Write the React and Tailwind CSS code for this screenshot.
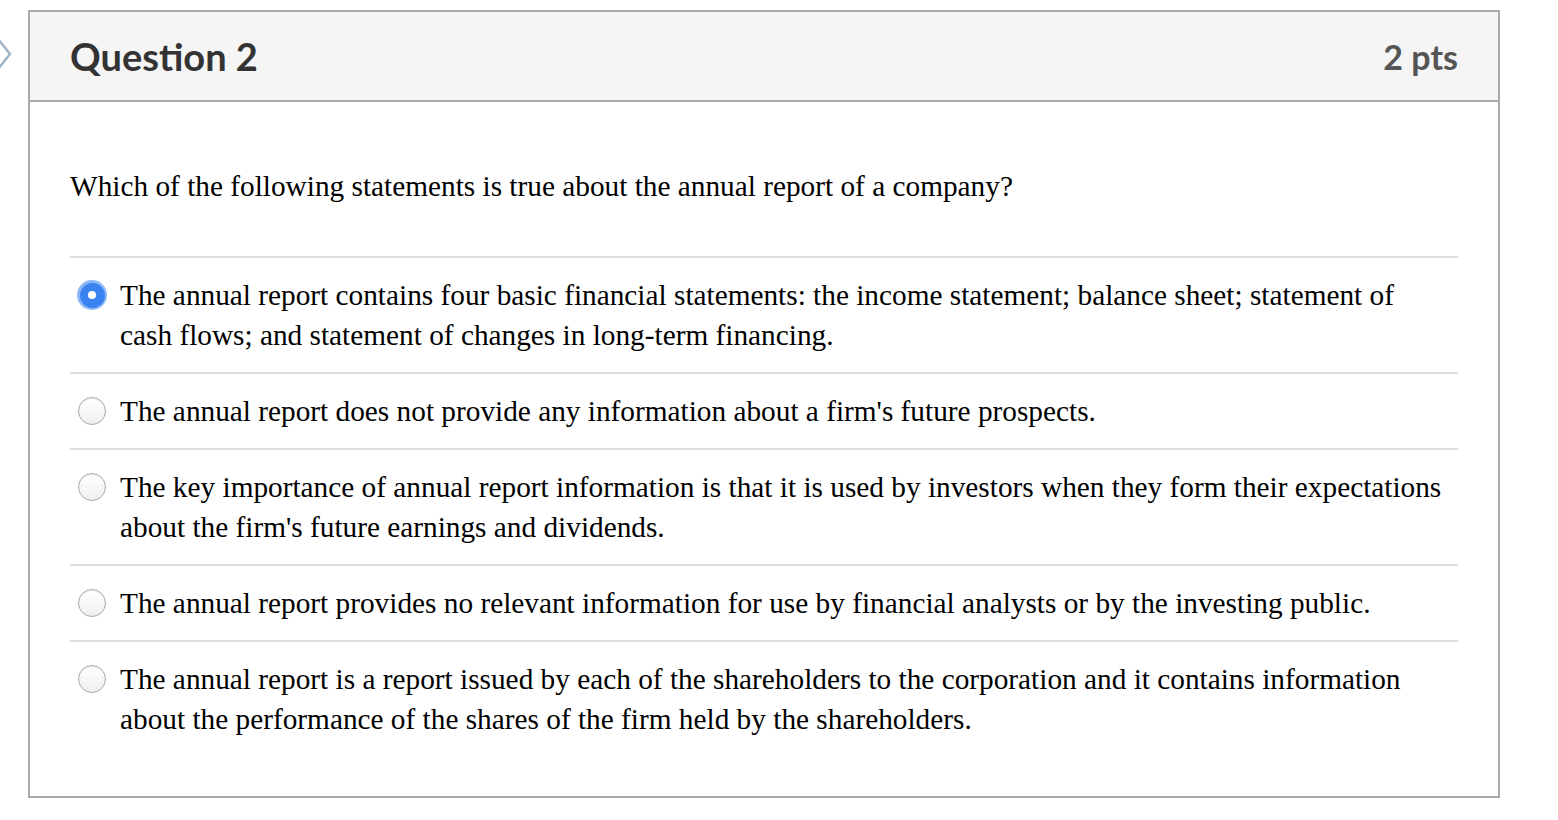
import React from 'react';

const answers = [
  {
    text: 'The annual report contains four basic financial statements: the income statement; balance sheet; statement of cash flows; and statement of changes in long-term financing.',
    selected: true,
  },
  { text: "The annual report does not provide any information about a firm's future prospects." },
  {
    text: "The key importance of annual report information is that it is used by investors when they form their expectations about the firm's future earnings and dividends.",
  },
  { text: 'The annual report provides no relevant information for use by financial analysts or by the investing public.' },
  {
    text: 'The annual report is a report issued by each of the shareholders to the corporation and it contains information about the performance of the shares of the firm held by the shareholders.',
  },
];

function Radio({ selected }) {
  if (selected) {
    return (
      <span className="flex h-[30px] w-[30px] shrink-0 items-center justify-center rounded-full bg-[#8db8f7]">
        <span className="flex h-[25px] w-[25px] items-center justify-center rounded-full bg-[#3a82f0]">
          <span className="h-[8px] w-[8px] rounded-full bg-white" />
        </span>
      </span>
    );
  }
  return (
    <span className="h-[28px] w-[28px] shrink-0 rounded-full border border-[#aaaaaa] bg-gradient-to-b from-white to-[#f0f0f0] shadow-[inset_0_1px_1px_rgba(0,0,0,0.08)]" />
  );
}

export default function App() {
  return (
    <div className="relative min-h-[820px] bg-white pt-[10px]">
      <svg className="absolute left-0 top-[36px]" width="14" height="36" viewBox="0 0 14 36">
        <path d="M-2 3 L10 18 L-2 33" fill="none" stroke="#a3b5c8" strokeWidth="2.5" />
      </svg>
      <div className="ml-[28px] w-[1472px] border-2 border-[#aaaaaa]">
        <div className="flex h-[90px] items-center justify-between border-b-2 border-[#aaaaaa] bg-[#f5f5f5] px-[40px] font-['Lato',sans-serif] font-bold">
          <h2 className="text-[38px] text-[#333333]">Question 2</h2>
          <span className="text-[34px] text-[#555555]">2 pts</span>
        </div>
        <div className="px-[40px] pb-[40px] pt-[64px] font-['Liberation_Serif','Times_New_Roman',serif] text-[29.3px] leading-[40px] text-black">
          <p className="mb-[50px]">Which of the following statements is true about the annual report of a company?</p>
          <div>
            {answers.map((a, i) => (
              <div key={i} className="flex gap-[13px] border-t-2 border-[#dddddd] py-[17px] pl-[7px]">
                <div className="flex h-[40px] w-[30px] shrink-0 items-center justify-center">
                  <Radio selected={a.selected} />
                </div>
                <div className="pr-[12px]">{a.text}</div>
              </div>
            ))}
          </div>
        </div>
      </div>
    </div>
  );
}
